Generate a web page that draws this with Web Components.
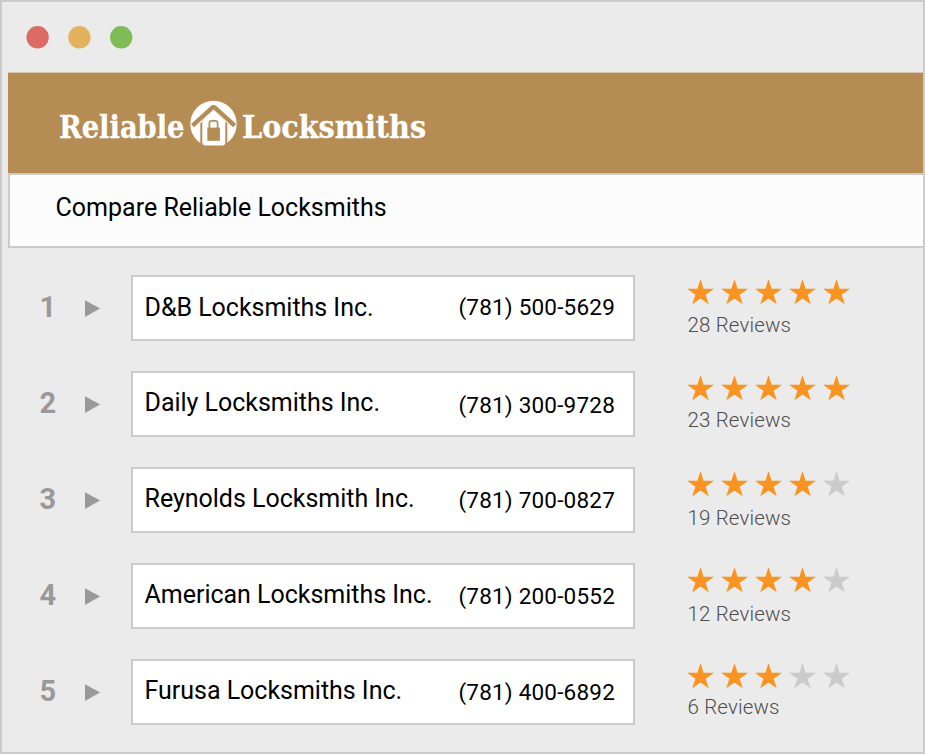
<!DOCTYPE html>
<html lang="en">
<head>
<meta charset="utf-8">
<title>Reliable Locksmiths</title>
<style>
  body {
    margin: 0;
    font-family: Roboto, "Liberation Sans", sans-serif;
    color: #000;
  }
</style>
</head>
<body>
<browser-frame>
  <site-banner></site-banner>
  <page-heading>Compare Reliable Locksmiths</page-heading>
  <listing-table>
    <listing-row rank="1" phone="(781) 500-5629" stars="5" reviews="28" style="--name-shift: 1px; --review-gap: 1px">D&amp;B Locksmiths Inc.</listing-row>
    <listing-row rank="2" phone="(781) 300-9728" stars="5" reviews="23" style="--phone-shift: 2px">Daily Locksmiths Inc.</listing-row>
    <listing-row rank="3" phone="(781) 700-0827" stars="4" reviews="19" style="--phone-shift: 1px; --review-gap: 2px">Reynolds Locksmith Inc.</listing-row>
    <listing-row rank="4" phone="(781) 200-0552" stars="4" reviews="12" style="--phone-shift: 1px; --review-gap: 2px">American Locksmiths Inc.</listing-row>
    <listing-row rank="5" phone="(781) 400-6892" stars="3" reviews="6" style="--phone-shift: 1px; --review-gap: -1px">Furusa Locksmiths Inc.</listing-row>
  </listing-table>
</browser-frame>

<script>
function makeTemplate(html) {
    const template = document.createElement('template');
    template.innerHTML = html;
    return template;
}

const frameTemplate = makeTemplate(`
  <style>
    :host {
      display: flex;
      flex-direction: column;
      width: 925px;
      height: 754px;
      box-sizing: border-box;
      border: 2px solid #cbcbcb;
      background: #ebebeb;
      overflow: hidden;
    }
    .lights {
      display: flex;
      gap: 19px;
      height: 70px;
      padding-left: 24px;
      align-items: center;
      flex: none;
    }
    svg { display: block; width: 23px; height: 23px; }
    .content { padding-left: 6px; }
  </style>
  <div class="lights">
    <svg viewBox="0 0 23 23"><circle cx="11.6" cy="11.3" r="11.2" fill="#dc6b64"/></svg>
    <svg viewBox="0 0 23 23"><circle cx="11.4" cy="11.3" r="11.2" fill="#e3b25d"/></svg>
    <svg viewBox="0 0 23 23"><circle cx="11.2" cy="11.3" r="11.2" fill="#80bc55"/></svg>
  </div>
  <div class="content"><slot></slot></div>
`);

const bannerTemplate = makeTemplate(`
  <style>
    :host {
      display: block;
      height: 101px;
      box-sizing: border-box;
      border-top: 1px solid #d3c5b1;
      background: #b58c54;
    }
    svg { display: block; overflow: visible; }
    text {
      font-family: "DejaVu Serif Condensed", "DejaVu Serif", serif;
      font-weight: bold;
      font-size: 32.5px;
      fill: #fff;
      stroke: #fff;
      stroke-width: 0.3px;
    }
  </style>
  <svg width="560" height="100" viewBox="8 73 560 100">
    <text x="59" y="137.5" textLength="125.5" lengthAdjust="spacingAndGlyphs">Reliable</text>
    <circle cx="213.5" cy="124" r="23.2" fill="#fff"/>
    <path d="M200.3 123.5 L213.5 110 L227.3 123.5 V148 H200.3 Z" fill="#b58c54"/>
    <path d="M202.3 121.5 L213.5 110 L225.3 121.5 V142.5 a3 3 0 0 1 -3 3 H205.3 a3 3 0 0 1 -3 -3 Z" fill="#fff"/>
    <path d="M192.5 125.6 L212 107.8 Q213.6 106.5 215.2 107.8 L234.7 125.6" fill="none" stroke="#b58c54" stroke-width="4.4"/>
    <rect x="207.3" y="127.6" width="12.6" height="13.2" fill="#b58c54"/>
    <path d="M209.4 128 V123 a2.2 2.2 0 0 1 2.2 -2.2 H215.4 a2.2 2.2 0 0 1 2.2 2.2 V128" fill="none" stroke="#b58c54" stroke-width="1.7"/>
    <text x="242" y="137.5" textLength="184" lengthAdjust="spacingAndGlyphs">Locksmiths</text>
  </svg>
`);

const headingTemplate = makeTemplate(`
  <style>
    :host {
      display: block;
      height: 75px;
      box-sizing: border-box;
      border: 2px solid #cbcbcb;
      border-right: 0;
      padding-left: 45.6px;
      background: #fcfcfc;
      font-size: 25px;
      line-height: 66px;
    }
  </style>
  <slot></slot>
`);

const tableTemplate = makeTemplate(`
  <style>
    :host {
      display: grid;
      grid-auto-rows: 95.85px;
      padding-top: 27.2px;
    }
  </style>
  <slot></slot>
`);

const rowTemplate = makeTemplate(`
  <style>
    :host {
      display: grid;
      grid-template-columns: 77px 46px 504px 1fr;
      align-items: start;
    }
    .rank {
      padding-left: 31.5px;
      font-size: 29px;
      font-weight: bold;
      line-height: 64px;
      color: #999;
    }
    .arrow { display: block; margin-top: 25px; }
    .card {
      display: flex;
      justify-content: space-between;
      height: 66px;
      box-sizing: border-box;
      border: 2px solid #cbcbcb;
      padding: 0 18px 0 11.5px;
      background: #fff;
      line-height: 60px;
      white-space: nowrap;
    }
    .name { font-size: 25px; letter-spacing: -0.02px; margin-top: var(--name-shift, 0); }
    .phone { font-size: 22.5px; letter-spacing: 0.2px; margin-top: var(--phone-shift, 0); }
    .rating { padding-left: 52px; }
    .stars { display: flex; gap: 7px; padding-top: 4.2px; height: 26.8px; }
    .reviews {
      margin-top: var(--review-gap, 0);
      padding-left: 0.5px;
      font-size: 20.5px;
      font-weight: 300;
      line-height: 36px;
      letter-spacing: 0.15px;
      color: #4d4d4d;
    }
  </style>
  <div class="rank"></div>
  <svg class="arrow" width="16" height="18"><path d="M0 0.2 L15 8.6 L0 17 Z" fill="#999"/></svg>
  <div class="card">
    <span class="name"><slot></slot></span>
    <span class="phone"></span>
  </div>
  <div class="rating">
    <div class="stars"></div>
    <div class="reviews"></div>
  </div>
`);

const STAR = 'M13.5 0 L16.6 9.7 L27 9.7 L18.6 15.7 L21.8 25.3 L13.5 19.4 L5.2 25.3 L8.4 15.7 L0 9.7 L10.4 9.7 Z';

function defineStatic(name, template) {
    customElements.define(name, class extends HTMLElement {
        constructor() {
            super();
            this.attachShadow({ mode: 'open' })
                .appendChild(template.content.cloneNode(true));
        }
    });
}

class ListingRow extends HTMLElement {
    constructor() {
        super();
        this.attachShadow({ mode: 'open' })
            .appendChild(rowTemplate.content.cloneNode(true));
    }

    connectedCallback() {
        const root = this.shadowRoot;
        root.querySelector('.rank').textContent = this.getAttribute('rank');
        root.querySelector('.phone').textContent = this.getAttribute('phone');
        root.querySelector('.reviews').textContent = this.getAttribute('reviews') + ' Reviews';
        this._renderStars(+this.getAttribute('stars'));
    }

    _renderStars(count) {
        let html = '';
        for (let i = 0; i < 5; i++) {
            const fill = i < count ? '#fa931f' : '#cbcbcb';
            html += `<svg width="27" height="26"><path d="${STAR}" fill="${fill}"/></svg>`;
        }
        this.shadowRoot.querySelector('.stars').innerHTML = html;
    }
}

defineStatic('browser-frame', frameTemplate);
defineStatic('site-banner', bannerTemplate);
defineStatic('page-heading', headingTemplate);
defineStatic('listing-table', tableTemplate);
customElements.define('listing-row', ListingRow);
</script>
</body>
</html>
